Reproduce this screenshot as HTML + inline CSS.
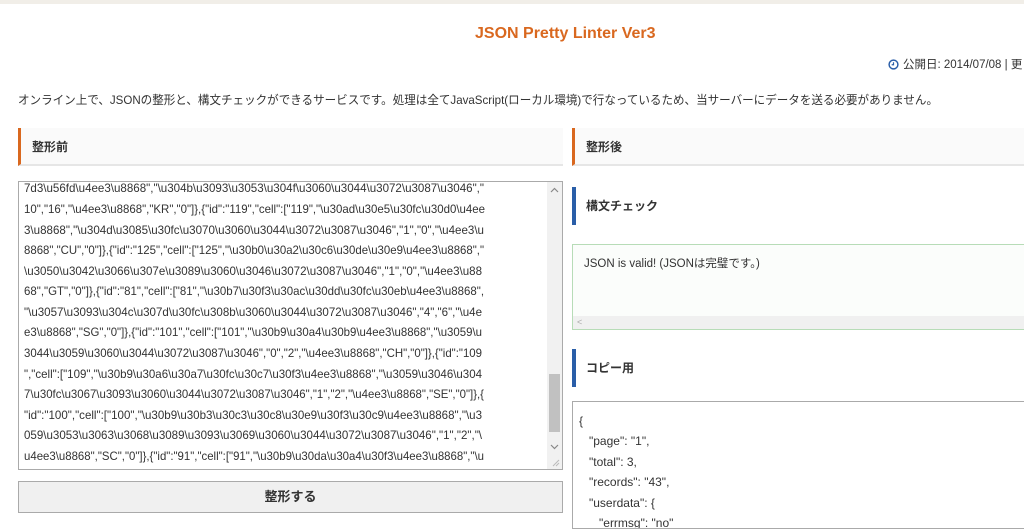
<!DOCTYPE html>
<html><head><meta charset="utf-8"><style>
*{box-sizing:border-box;margin:0;padding:0}
body{width:1024px;height:530px;overflow:hidden;background:#fff;font-family:"Liberation Sans","Noto Sans CJK JP",sans-serif;color:#333;position:relative;font-size:12px}
.top{position:absolute;left:0;top:0;width:1024px;height:4px;background:#f1eee8}
.title{position:absolute;left:475px;top:25px;color:#d9681f;font-weight:bold;font-size:16px;white-space:nowrap}
.date{position:absolute;left:888px;top:56px;font-size:11.5px;white-space:nowrap;color:#333}
.date svg{vertical-align:-2px;margin-right:4px}
.h{position:absolute;height:38px;background:#fafafa;border-bottom:2px solid #e6e6e6;border-left:3px solid #d9681f;font-weight:bold;font-size:12px;padding:10px 0 0 11px}
.hb{position:absolute;height:38px;border-left:4px solid #2a5ea8;font-weight:bold;font-size:12px;padding:10px 0 0 10px}
.ta{position:absolute;left:18px;top:181px;width:545px;height:289px;border:1px solid #aaa;overflow:hidden}
.sb{position:absolute;right:0;top:0;width:15px;height:100%;background:#f1f1f1}
.thumb{position:absolute;right:2px;top:192px;width:11px;height:58px;background:#c1c1c1}
.btn{position:absolute;left:18px;top:481px;width:545px;height:32px;background:#f0f0f0;border:1px solid #aaa;text-align:center;font-weight:bold;font-size:13px;line-height:30px}
.res{position:absolute;left:572px;top:244px;width:460px;height:86px;border:1px solid #b7dcb7;background:#fbfdfb}
.res .t{position:absolute;left:11px;top:10px;font-size:11.5px}
.res .hs{position:absolute;left:0;bottom:0;width:100%;height:13px;background:#f0f0f0;color:#aaa;font-size:9px;padding-left:4px;line-height:13px}
.pre{position:absolute;left:572px;top:401px;width:460px;height:128px;border:1px solid #aaa;overflow:hidden}
.pre .t{position:absolute;left:6px;top:9px;font-size:12px;line-height:20.4px;white-space:pre}
svg text{font-family:"Liberation Sans","Noto Sans CJK JP",sans-serif}
</style></head><body>
<div class="top"></div>
<div class="title">JSON Pretty Linter Ver3</div>
<div class="date"><svg width="11" height="11" viewBox="0 0 12 12"><circle cx="6" cy="6" r="4.8" fill="none" stroke="#2a5ea8" stroke-width="1.6"/><path d="M6 3.5V6.3H4" fill="none" stroke="#2a5ea8" stroke-width="1.3"/></svg>公開日: 2014/07/08 | 更</div>
<svg style="position:absolute;left:0;top:88px" width="1024" height="24"><text x="18" y="16" font-size="12" fill="#333" textLength="920" lengthAdjust="spacingAndGlyphs">オンライン上で、JSONの整形と、構文チェックができるサービスです。処理は全てJavaScript(ローカル環境)で行なっているため、当サーバーにデータを送る必要がありません。</text></svg>
<div class="h" style="left:18px;top:128px;width:545px">整形前</div>
<div class="h" style="left:572px;top:128px;width:460px">整形後</div>
<div class="ta">
<svg style="position:absolute;left:0;top:0" width="530" height="289" font-size="12" fill="#333">
<text x="5" y="10" textLength="460" lengthAdjust="spacingAndGlyphs">7d3\u56fd\u4ee3\u8868","\u304b\u3093\u3053\u304f\u3060\u3044\u3072\u3087\u3046","</text>
<text x="5" y="31" textLength="461" lengthAdjust="spacingAndGlyphs">10","16","\u4ee3\u8868","KR","0"]},{"id":"119","cell":["119","\u30ad\u30e5\u30fc\u30d0\u4ee</text>
<text x="5" y="52" textLength="460" lengthAdjust="spacingAndGlyphs">3\u8868","\u304d\u3085\u30fc\u3070\u3060\u3044\u3072\u3087\u3046","1","0","\u4ee3\u</text>
<text x="5" y="72" textLength="460" lengthAdjust="spacingAndGlyphs">8868","CU","0"]},{"id":"125","cell":["125","\u30b0\u30a2\u30c6\u30de\u30e9\u4ee3\u8868","</text>
<text x="5" y="93" textLength="458" lengthAdjust="spacingAndGlyphs">\u3050\u3042\u3066\u307e\u3089\u3060\u3046\u3072\u3087\u3046","1","0","\u4ee3\u88</text>
<text x="5" y="113" textLength="460" lengthAdjust="spacingAndGlyphs">68","GT","0"]},{"id":"81","cell":["81","\u30b7\u30f3\u30ac\u30dd\u30fc\u30eb\u4ee3\u8868",</text>
<text x="5" y="134" textLength="458" lengthAdjust="spacingAndGlyphs">"\u3057\u3093\u304c\u307d\u30fc\u308b\u3060\u3044\u3072\u3087\u3046","4","6","\u4e</text>
<text x="5" y="154" textLength="458" lengthAdjust="spacingAndGlyphs">e3\u8868","SG","0"]},{"id":"101","cell":["101","\u30b9\u30a4\u30b9\u4ee3\u8868","\u3059\u</text>
<text x="5" y="175" textLength="458" lengthAdjust="spacingAndGlyphs">3044\u3059\u3060\u3044\u3072\u3087\u3046","0","2","\u4ee3\u8868","CH","0"]},{"id":"109</text>
<text x="5" y="196" textLength="458" lengthAdjust="spacingAndGlyphs">","cell":["109","\u30b9\u30a6\u30a7\u30fc\u30c7\u30f3\u4ee3\u8868","\u3059\u3046\u304</text>
<text x="5" y="216" textLength="460" lengthAdjust="spacingAndGlyphs">7\u30fc\u3067\u3093\u3060\u3044\u3072\u3087\u3046","1","2","\u4ee3\u8868","SE","0"]},{</text>
<text x="5" y="237" textLength="458" lengthAdjust="spacingAndGlyphs">"id":"100","cell":["100","\u30b9\u30b3\u30c3\u30c8\u30e9\u30f3\u30c9\u4ee3\u8868","\u3</text>
<text x="5" y="257" textLength="458" lengthAdjust="spacingAndGlyphs">059\u3053\u3063\u3068\u3089\u3093\u3069\u3060\u3044\u3072\u3087\u3046","1","2","\</text>
<text x="5" y="278" textLength="460" lengthAdjust="spacingAndGlyphs">u4ee3\u8868","SC","0"]},{"id":"91","cell":["91","\u30b9\u30da\u30a4\u30f3\u4ee3\u8868","\u</text>
</svg>
<div class="sb"><div class="thumb"></div>
<svg style="position:absolute;left:3px;top:5px" width="9" height="6"><path d="M1 5L4.5 1.5L8 5" fill="none" stroke="#888" stroke-width="1.2"/></svg>
<svg style="position:absolute;left:3px;top:262px" width="9" height="6"><path d="M1 1L4.5 4.5L8 1" fill="none" stroke="#888" stroke-width="1.2"/></svg>
<svg style="position:absolute;left:5px;top:277px" width="8" height="8"><path d="M7 1L1 7M7 4L4 7" stroke="#bbb" stroke-width="1"/></svg>
</div></div>
<div class="btn">整形する</div>
<div class="hb" style="left:572px;top:187px">構文チェック</div>
<div class="res"><div class="t">JSON is valid! (JSONは完璧です。)</div><div class="hs">&lt;</div></div>
<div class="hb" style="left:572px;top:349px">コピー用</div>
<div class="pre"><div class="t">{
   "page": "1",
   "total": 3,
   "records": "43",
   "userdata": {
      "errmsg": "no"</div></div>
</body></html>
